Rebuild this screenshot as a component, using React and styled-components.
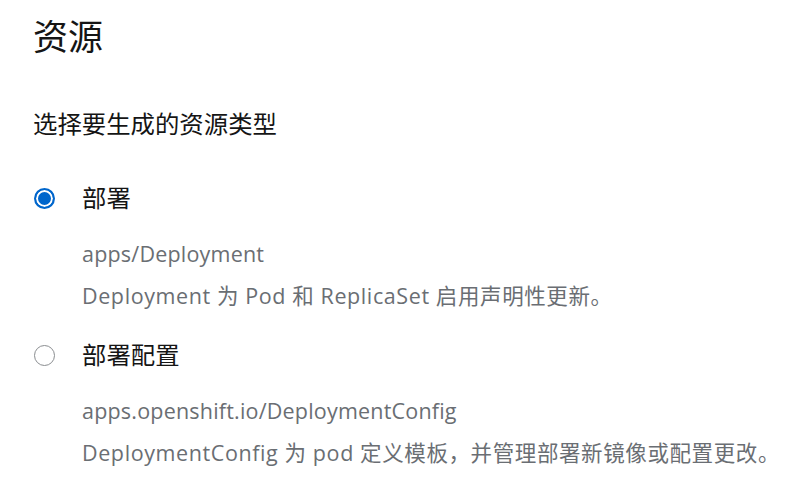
import styled, { createGlobalStyle } from 'styled-components';
import { useState } from 'react';

const GlobalStyle = createGlobalStyle`
    body {
        margin: 0;
        background: #fff;
        font-family: 'Open Sans', 'Noto Sans CJK SC', sans-serif;
        color: #151515;
    }
`;

const options = [
    {
        id: 'deployment',
        label: '部署',
        kind: 'apps/Deployment',
        description: 'Deployment 为 Pod 和 ReplicaSet 启用声明性更新。',
    },
    {
        id: 'deploymentconfig',
        label: '部署配置',
        kind: 'apps.openshift.io/DeploymentConfig',
        description: 'DeploymentConfig 为 pod 定义模板，并管理部署新镜像或配置更改。',
    },
];

function App() {
    const [selected, setSelected] = useState('deployment');

    return (
        <>
            <GlobalStyle />
            <Page>
                <Title>资源</Title>
                <GroupLabel>选择要生成的资源类型</GroupLabel>
                <RadioList>
                    {options.map(option => (
                        <RadioItem key={option.id} onClick={() => setSelected(option.id)}>
                            <RadioRow>
                                <RadioCircle checked={selected === option.id} />
                                <RadioLabel>{option.label}</RadioLabel>
                            </RadioRow>
                            <RadioBody>
                                <Kind>{option.kind}</Kind>
                                <Description>{option.description}</Description>
                            </RadioBody>
                        </RadioItem>
                    ))}
                </RadioList>
            </Page>
        </>
    );
}

export default App;

const Page = styled.div`
    padding: 13px 33px 20px;
`;

const Title = styled.h1`
    margin: 0;
    font-size: 35px;
    font-weight: 400;
    line-height: 47px;
`;

const GroupLabel = styled.div`
    margin-top: 46px;
    font-size: 24.4px;
    line-height: 36px;
`;

const RadioList = styled.div`
    margin-top: 38px;
    display: flex;
    flex-direction: column;
    gap: 26px;
`;

const RadioItem = styled.div`
    cursor: pointer;
`;

const RadioRow = styled.div`
    display: flex;
    align-items: center;
`;

const RadioCircle = styled.span`
    box-sizing: border-box;
    width: 21px;
    height: 21px;
    border-radius: 50%;
    margin-left: 1px;
    border: ${props => props.checked ? '2px solid #0066cc' : '1px solid #8a8d90'};
    background: ${props => props.checked ? '#0066cc' : '#fff'};
    box-shadow: ${props => props.checked ? 'inset 0 0 0 2px #fff' : 'none'};
`;

const RadioLabel = styled.span`
    margin-left: 27px;
    font-size: 24.4px;
    line-height: 36px;
`;

const RadioBody = styled.div`
    margin-left: 49px;
    margin-top: 22px;
    color: #6a6e73;
    font-size: 21.5px;
    line-height: 31px;
    letter-spacing: 0.2px;
    white-space: nowrap;
`;

const Kind = styled.div``;

const Description = styled.div`
    margin-top: 11px;
    letter-spacing: 0.6px;
`;
